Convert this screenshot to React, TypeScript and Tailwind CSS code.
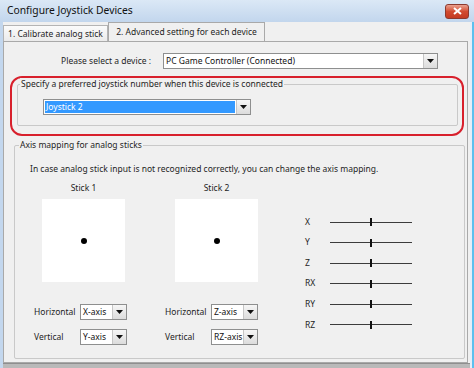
import React from 'react'

const AXES = ['X', 'Y', 'Z', 'RX', 'RY', 'RZ']

function DropArrow() {
  return (
    <div className="flex items-center justify-center border-l border-[#c6c6c6] bg-gradient-to-b from-[#f6f6f6] to-[#dcdcdc] w-[14px] h-full">
      <svg width="7" height="4" viewBox="0 0 7 4">
        <path d="M0 0H7L3.5 4Z" fill="#111" />
      </svg>
    </div>
  )
}

function Combo({ value, className }: { value: string; className: string }) {
  return (
    <div className={`flex items-stretch bg-white border border-[#8e8f8f] ${className}`}>
      <span className="flex-1 pl-[2px] leading-[14px] text-[#111] overflow-hidden whitespace-nowrap">{value}</span>
      <DropArrow />
    </div>
  )
}

function Slider() {
  return (
    <div className="relative w-[82px] h-[8px] flex items-center">
      <div className="w-full h-px bg-[#3c3c3c]" />
      <div className="absolute left-[40px] top-0 w-[2px] h-[8px] bg-[#111]" />
    </div>
  )
}

function StickBox() {
  return (
    <div className="w-[83px] h-[83px] bg-white flex items-center justify-center">
      <div className="w-[6px] h-[6px] rounded-full bg-black" />
    </div>
  )
}

function StickColumn({ name, h, v, labelIndent }: { name: string; h: string; v: string; labelIndent: string }) {
  return (
    <div className="flex flex-col">
      <div className="w-[83px] text-center leading-[12px] ml-[12px]">{name}</div>
      <div className="ml-[12px] mt-[5px]">
        <StickBox />
      </div>
      <div className={`flex items-center mt-[22px] ${labelIndent}`}>
        <span className="w-[46px]">Horizontal</span>
        <Combo value={h} className="w-[47px] h-[16px]" />
      </div>
      <div className={`flex items-center mt-[9px] ${labelIndent}`}>
        <span className="w-[46px]">Vertical</span>
        <Combo value={v} className="w-[47px] h-[16px]" />
      </div>
    </div>
  )
}

export default function App() {
  return (
    <div className="w-[474px] h-[368px] bg-[#c3d7ee] overflow-hidden flex flex-col text-[8.5px] text-[#1e1e1e]" style={{ fontFamily: '"Noto Sans", "Open Sans", sans-serif' }}>
      {/* Title bar */}
      <div className="h-[22px] flex items-center justify-between bg-gradient-to-b from-[#dbe8f6] to-[#c2d6ed] pl-[7px] pr-[5px]">
        <span className="text-[10.3px] text-[#111]">Configure Joystick Devices</span>
        <div className="w-[24px] h-[15px] rounded-[3px] border border-[#8c3a2f] bg-gradient-to-b from-[#e9a08f] via-[#d24b30] to-[#c43b22] flex items-center justify-center">
          <svg width="9" height="8" viewBox="0 0 9 8">
            <path d="M1 1L8 7M8 1L1 7" stroke="#fff" strokeWidth="2" />
          </svg>
        </div>
      </div>

      <div className="flex-1 flex pl-[3px]">
        <div className="flex-1 flex flex-col bg-[#f0f0f0]">
          {/* Tabs */}
          <div className="h-[19px] flex items-end">
            <div className="h-[17px] w-[105px] flex items-center justify-center bg-gradient-to-b from-[#fbfbfb] to-[#eaeaea] border border-b-0 border-[#b4b4b4] mb-[-1px]">
              1. Calibrate analog stick
            </div>
            <div className="h-[19px] w-[157px] flex items-center justify-center bg-[#f0f0f0] border border-b-0 border-[#a9a9a9] relative z-10">
              2. Advanced setting for each device
            </div>
          </div>

          {/* Panel */}
          <div className="flex-1 border border-[#a9a9a9] bg-[#f0f0f0] flex flex-col pt-[11px] pl-[6px] pr-[2px] mr-[2px]">
            <div className="flex items-center">
              <span className="w-[141px] text-right">Please select a device :</span>
              <Combo value="PC Game Controller (Connected)" className="ml-[12px] w-[275px] h-[16px]" />
            </div>

            {/* Highlighted joystick number group */}
            <div className="mt-[7px] w-[454px] h-[60px] border-2 border-[#d8202c] rounded-[12px] flex flex-col pl-[5px] pt-[6px]">
              <div className="w-[441px] h-[42px] border border-[#c9c9c9] rounded-[2px] relative">
                <span className="absolute left-[2px] top-[-7px] bg-[#f0f0f0] px-[1px] leading-[12px]">
                  Specify a preferred joystick number when this device is connected
                </span>
                <div className="ml-[25px] mt-[14px] flex items-stretch w-[208px] h-[16px] border border-[#8e8f8f] bg-white">
                  <div className="flex-1 m-[1px] bg-[#3399ff] text-white leading-[12px] pl-[1px]">Joystick 2</div>
                  <DropArrow />
                </div>
              </div>
            </div>

            {/* Axis mapping group */}
            <div className="mt-[9px] ml-[4px] w-[451px] h-[214px] border border-[#c9c9c9] rounded-[2px] relative">
              <span className="absolute left-[4px] top-[-7px] bg-[#f0f0f0] px-[1px] leading-[12px]">
                Axis mapping for analog sticks
              </span>
              <div className="ml-[15px] mt-[17px] leading-[12px]">
                In case analog stick input is not recognized correctly, you can change the axis mapping.
              </div>
              <div className="flex mt-[7px] ml-[15px]">
                <StickColumn name="Stick 1" h="X-axis" v="Y-axis" labelIndent="ml-[4px]" />
                <div className="ml-[36px]">
                  <StickColumn name="Stick 2" h="Z-axis" v="RZ-axis" labelIndent="ml-[2px]" />
                </div>
                <div className="ml-[47px] mt-[34px] flex flex-col gap-[8.6px]">
                  {AXES.map((a) => (
                    <div key={a} className="flex items-center h-[12px]">
                      <span className="w-[25px]">{a}</span>
                      <Slider />
                    </div>
                  ))}
                </div>
              </div>
            </div>
          </div>
          <div className="h-[5px] bg-[#b9b9b9] border-t border-[#8f8f8f]" />
        </div>
        <div className="w-[5px] flex">
          <div className="w-[2px] bg-[#e6eef8]" />
          <div className="w-[3px] bg-[#5cc0ee]" />
        </div>
      </div>
    </div>
  )
}
